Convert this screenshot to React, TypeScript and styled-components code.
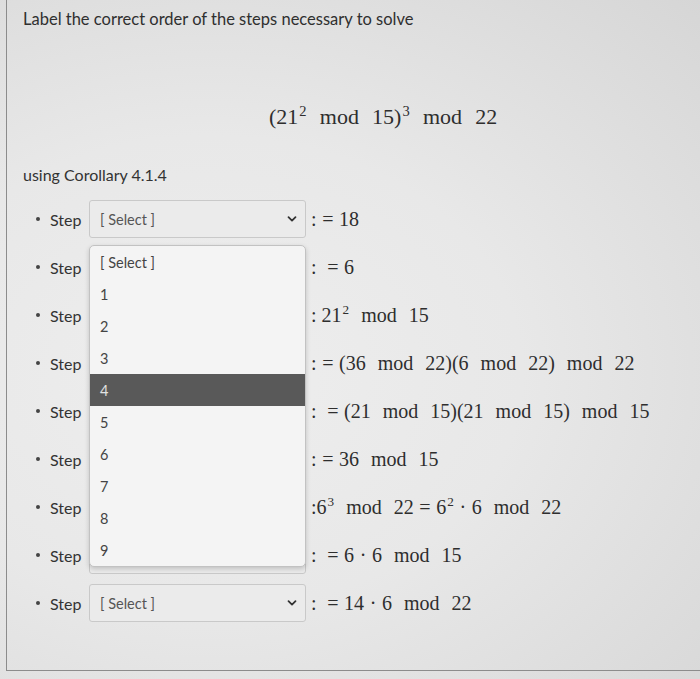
import styled, { createGlobalStyle } from "styled-components";

const GlobalStyle = createGlobalStyle`
  html, body {
    margin: 0;
    padding: 0;
  }
  body {
    background: #d9d9d9;
    font-family: Lato, "Open Sans", sans-serif;
    color: #353535;
  }
`;

const Page = styled.div`
  width: 700px;
  height: 679px;
  overflow: hidden;
  background: radial-gradient(
    ellipse at 30% 55%,
    #eeeeee 0%,
    #e8e8e8 45%,
    #d6d6d6 100%
  );
`;

const Panel = styled.div`
  position: relative;
  margin-left: 6px;
  height: 671px;
  box-sizing: border-box;
  border-left: 1px solid #8c8c8c;
  border-bottom: 1px solid #8c8c8c;
  padding: 8px 0 0 16px;
`;

const Prompt = styled.div`
  font-size: 16.5px;
  line-height: 22px;
  color: #2f2f2f;
`;

const Formula = styled.div`
  margin-top: 73px;
  padding-left: 246px;
  font-family: "Liberation Serif", "DejaVu Serif", serif;
  font-size: 22px;
  line-height: 28px;
  color: #2e2e2e;
`;

const Corollary = styled.div`
  margin-top: 34px;
  font-size: 16px;
  line-height: 20px;
  color: #333;
`;

const StepList = styled.ul`
  list-style: none;
  margin: 10px 0 0;
  padding: 0;
`;

const StepRow = styled.li`
  display: flex;
  align-items: center;
  height: 48px;
`;

const Bullet = styled.span`
  width: 4px;
  height: 4px;
  margin-left: 13px;
  background: #444;
  border-radius: 50%;
`;

const StepLabel = styled.span`
  margin-left: 10px;
  width: 39px;
  font-size: 16px;
  color: #333;
`;

const SelectWrap = styled.div`
  position: relative;
  width: 217px;
  height: 38px;
  flex-shrink: 0;
`;

const SelectBox = styled.div`
  box-sizing: border-box;
  height: 100%;
  display: flex;
  align-items: center;
  justify-content: space-between;
  padding: 0 8px 0 10px;
  background: #ebebeb;
  border: 1px solid #c9c9c9;
  border-radius: 3px;
  font-size: 14.5px;
  color: #555;
`;

const Chevron = styled.svg`
  width: 10px;
  height: 10px;
`;

const Menu = styled.ul`
  position: absolute;
  top: calc(100% + 7px);
  left: 0;
  z-index: 2;
  width: 217px;
  box-sizing: border-box;
  margin: 0;
  padding: 0;
  list-style: none;
  background: #f4f4f4;
  border: 1px solid #c2c2c2;
  border-radius: 5px;
  box-shadow: 0 2px 5px rgba(0, 0, 0, 0.18);
  overflow: hidden;
`;

const MenuOption = styled.li<{ $active?: boolean }>`
  height: 32px;
  display: flex;
  align-items: center;
  padding-left: 10px;
  font-size: 14.5px;
  color: ${(p) => (p.$active ? "#e2e2e2" : "#444")};
  background: ${(p) => (p.$active ? "#595959" : "transparent")};
`;

const Expr = styled.span`
  margin-left: 5px;
  font-family: "Liberation Serif", "DejaVu Serif", serif;
  font-size: 20px;
  color: #2e2e2e;
  white-space: nowrap;
`;

const Op = styled.span`
  margin: 0 0.28em;
`;

const Mod = styled.span`
  margin: 0 0.6em;
`;

const Sup = styled.sup`
  font-size: 0.66em;
  vertical-align: 0.55em;
  line-height: 0;
  margin-left: 1px;
`;

const ChevronIcon = () => (
  <Chevron viewBox="0 0 10 10">
    <path
      d="M1.5 3.2 L5 6.6 L8.5 3.2"
      fill="none"
      stroke="#333"
      strokeWidth="1.8"
      strokeLinecap="round"
      strokeLinejoin="round"
    />
  </Chevron>
);

const options = ["[ Select ]", "1", "2", "3", "4", "5", "6", "7", "8", "9"];

const steps: React.ReactNode[] = [
  <>
    :<Op>=</Op>18
  </>,
  <>
    : <Op>=</Op>6
  </>,
  <>
    : 21<Sup>2</Sup>
    <Mod>mod</Mod>15
  </>,
  <>
    :<Op>=</Op>(36<Mod>mod</Mod>22)(6<Mod>mod</Mod>22)<Mod>mod</Mod>22
  </>,
  <>
    : <Op>=</Op>(21<Mod>mod</Mod>15)(21<Mod>mod</Mod>15)<Mod>mod</Mod>15
  </>,
  <>
    :<Op>=</Op>36<Mod>mod</Mod>15
  </>,
  <>
    :6<Sup>3</Sup>
    <Mod>mod</Mod>22<Op>=</Op>6<Sup>2</Sup>
    <Op>·</Op>6<Mod>mod</Mod>22
  </>,
  <>
    : <Op>=</Op>6<Op>·</Op>6<Mod>mod</Mod>15
  </>,
  <>
    : <Op>=</Op>14<Op>·</Op>6<Mod>mod</Mod>22
  </>,
];

// the first select is open; rows 2–8 sit underneath its option list
const isCovered = (i: number) => i > 0 && i < steps.length - 1;

export default function App() {
  return (
    <>
      <GlobalStyle />
      <Page>
        <Panel>
          <Prompt>Label the correct order of the steps necessary to solve</Prompt>
          <Formula>
            (21<Sup>2</Sup>
            <Mod>mod</Mod>15)<Sup>3</Sup>
            <Mod>mod</Mod>22
          </Formula>
          <Corollary>using Corollary 4.1.4</Corollary>
          <StepList>
            {steps.map((expr, i) => (
              <StepRow key={i}>
                <Bullet />
                <StepLabel>Step</StepLabel>
                <SelectWrap>
                  <SelectBox>
                    {!isCovered(i) && (
                      <>
                        [ Select ]
                        <ChevronIcon />
                      </>
                    )}
                  </SelectBox>
                  {i === 0 && (
                    <Menu>
                      {options.map((o) => (
                        <MenuOption key={o} $active={o === "4"}>
                          {o}
                        </MenuOption>
                      ))}
                    </Menu>
                  )}
                </SelectWrap>
                <Expr>{expr}</Expr>
              </StepRow>
            ))}
          </StepList>
        </Panel>
      </Page>
    </>
  );
}
